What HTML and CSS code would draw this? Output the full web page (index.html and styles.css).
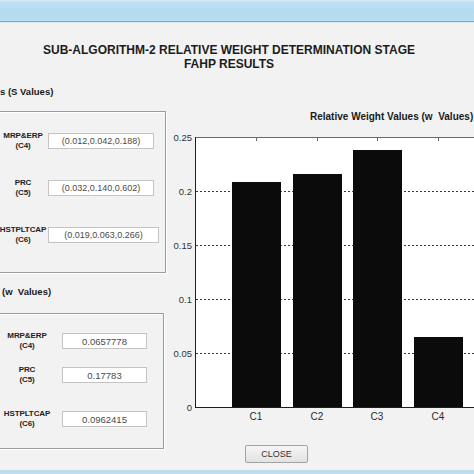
FILE: index.html
```html
<!DOCTYPE html>
<html>
<head>
<meta charset="utf-8">
<link rel="stylesheet" href="styles.css">
</head>
<body>
<div class="window">
  <div class="titlebar"></div>
  <div class="heading">
    <div>SUB-ALGORITHM-2 RELATIVE WEIGHT DETERMINATION STAGE</div>
    <div>FAHP RESULTS</div>
  </div>
  <div class="main">
    <div class="left">
      <div class="group-label first">s (S Values)</div>
      <div class="panel panel-s">
        <div class="row r1">
          <div class="lbl">MRP&amp;ERP<br>(C4)</div>
          <div class="field">(0.012,0.042,0.188)</div>
        </div>
        <div class="row r2">
          <div class="lbl">PRC<br>(C5)</div>
          <div class="field">(0.032,0.140,0.602)</div>
        </div>
        <div class="row r3">
          <div class="lbl">HSTPLTCAP<br>(C6)</div>
          <div class="field wide">(0.019,0.063,0.266)</div>
        </div>
      </div>
      <div class="group-label second">(w&nbsp; Values)</div>
      <div class="panel panel-w">
        <div class="row w1">
          <div class="lbl">MRP&amp;ERP<br>(C4)</div>
          <div class="field">0.0657778</div>
        </div>
        <div class="row w2">
          <div class="lbl">PRC<br>(C5)</div>
          <div class="field">0.17783</div>
        </div>
        <div class="row w3">
          <div class="lbl">HSTPLTCAP<br>(C6)</div>
          <div class="field">0.0962415</div>
        </div>
      </div>
    </div>
    <div class="right">
      <div class="chart-title">Relative Weight Values (w&nbsp; Values)</div>
      <svg class="chart" width="308" height="314" viewBox="166 123 308 314" xmlns="http://www.w3.org/2000/svg">
        <rect x="195" y="137" width="290" height="271" fill="#ffffff"/>
        <g stroke="#3a3a3a" stroke-width="1" stroke-dasharray="2 2">
          <line x1="196" y1="191.5" x2="480" y2="191.5"/>
          <line x1="196" y1="245.5" x2="480" y2="245.5"/>
          <line x1="196" y1="299.5" x2="480" y2="299.5"/>
          <line x1="196" y1="353.5" x2="480" y2="353.5"/>
        </g>
        <g fill="#0b0b0b">
          <rect x="232" y="182" width="49" height="226"/>
          <rect x="293" y="174" width="49" height="234"/>
          <rect x="353" y="150" width="49" height="258"/>
          <rect x="414" y="337" width="49" height="71"/>
        </g>
        <line x1="195" y1="137.5" x2="480" y2="137.5" stroke="#6a6a6a"/>
        <g stroke="#6a6a6a">
          <line x1="256.5" y1="138" x2="256.5" y2="141"/>
          <line x1="317.5" y1="138" x2="317.5" y2="141"/>
          <line x1="377.5" y1="138" x2="377.5" y2="141"/>
          <line x1="438.5" y1="138" x2="438.5" y2="141"/>
        </g>
        <line x1="195.5" y1="137" x2="195.5" y2="408" stroke="#1e1e1e"/>
        <line x1="195" y1="407.5" x2="480" y2="407.5" stroke="#1e1e1e"/>
        <g class="ytick" text-anchor="end">
          <text x="192" y="140.5">0.25</text>
          <text x="192" y="194.5">0.2</text>
          <text x="192" y="248.5">0.15</text>
          <text x="192" y="302.5">0.1</text>
          <text x="192" y="356.5">0.05</text>
          <text x="192" y="410.5">0</text>
        </g>
        <g class="xtick" text-anchor="middle">
          <text x="256" y="420">C1</text>
          <text x="317" y="420">C2</text>
          <text x="377" y="420">C3</text>
          <text x="438" y="420">C4</text>
        </g>
      </svg>
      <button class="close">CLOSE</button>
    </div>
  </div>
  <div class="footer"></div>
</div>
</body>
</html>
```

FILE: styles.css
```css
html, body {
  margin: 0;
  padding: 0;
}
body {
  width: 474px;
  height: 474px;
  overflow: hidden;
  background: #f2f2f2;
  font-family: "Liberation Sans", Arial, sans-serif;
  color: #1a1a1a;
}
.window {
  width: 474px;
  height: 474px;
  display: flex;
  flex-direction: column;
  overflow: hidden;
}
.titlebar {
  height: 21px;
  flex: none;
  background: linear-gradient(to bottom, #d9ecf6 0px, #bfe0f3 2px, #b4dbf1 12px, #b9ddf2 21px);
  border-bottom: 1px solid #86a8b6;
  box-shadow: 0 1px 0 #dcebf1;
}
.heading {
  flex: none;
  padding-top: 21px;
  padding-right: 16px;
  text-align: center;
  font-size: 12px;
  line-height: 14px;
  font-weight: bold;
  color: #1c1c1c;
}
.main {
  flex: none;
  display: flex;
  height: 397px;
}
.left {
  width: 166px;
  flex: none;
  display: flex;
  flex-direction: column;
}
.group-label {
  font-size: 9.5px;
  line-height: 12px;
  font-weight: bold;
  white-space: nowrap;
  color: #1a1a1a;
}
.group-label.first {
  margin-top: 15px;
}
.group-label.second {
  margin-top: 13px;
  padding-left: 2px;
}
.panel {
  box-sizing: border-box;
  margin-left: -3px;
  border: 1px solid #9c9c9c;
  box-shadow: inset 1px 1px 0 #ffffff, 1px 1px 0 #ffffff;
  display: flex;
  flex-direction: column;
}
.panel-s {
  margin-top: 13px;
  width: 169px;
  height: 162px;
  padding-top: 19px;
}
.panel-w {
  margin-top: 15px;
  width: 167px;
  height: 136px;
  padding-top: 17px;
}
.row {
  display: flex;
  align-items: center;
  height: 20px;
}
.lbl {
  font-size: 8px;
  line-height: 10.5px;
  font-weight: bold;
  text-align: center;
  white-space: nowrap;
  color: #222;
  letter-spacing: -0.1px;
}
.panel-s .lbl {
  width: 50px;
  flex: none;
}
.panel-s .field {
  margin-left: 0;
  width: 106px;
  height: 16px;
  font-size: 9px;
}
.panel-s .field.wide {
  width: 111px;
}
.panel-s .r2, .panel-s .r3 {
  margin-top: 27px;
}
.panel-w .lbl {
  width: 58px;
  flex: none;
}
.panel-w .field {
  margin-left: 6px;
  width: 85px;
  height: 16px;
  font-size: 9.5px;
}
.panel-w .w2 {
  margin-top: 14px;
}
.panel-w .w3 {
  margin-top: 24px;
}
.field {
  box-sizing: border-box;
  background: #ffffff;
  border: 1px solid #c4c4c4;
  color: #4a4a4a;
  display: flex;
  align-items: center;
  justify-content: center;
  white-space: nowrap;
}
.right {
  flex: 1;
  min-width: 0;
  display: flex;
  flex-direction: column;
  align-items: flex-start;
}
.chart-title {
  margin-top: 40px;
  padding-left: 144px;
  font-size: 10px;
  line-height: 12px;
  font-weight: bold;
  white-space: nowrap;
  color: #1a1a1a;
}
.chart {
  display: block;
  flex: none;
}
.ytick text {
  font-family: "Liberation Sans", Arial, sans-serif;
  font-size: 9.5px;
  fill: #333333;
}
.xtick text {
  font-family: "Liberation Sans", Arial, sans-serif;
  font-size: 10px;
  fill: #2a2a2a;
}
.close {
  margin-top: 8px;
  margin-left: 79px;
  width: 63px;
  height: 18px;
  padding: 0;
  font-family: "Liberation Sans", Arial, sans-serif;
  font-size: 9px;
  color: #333;
  background: linear-gradient(to bottom, #f6f6f6, #e2e2e2);
  border: 1px solid #a3a3a3;
  border-radius: 2px;
}
.footer {
  margin-top: auto;
  height: 4px;
  flex: none;
  border-top: 1px solid #e8f2f8;
  background: #bddcee;
}
```
